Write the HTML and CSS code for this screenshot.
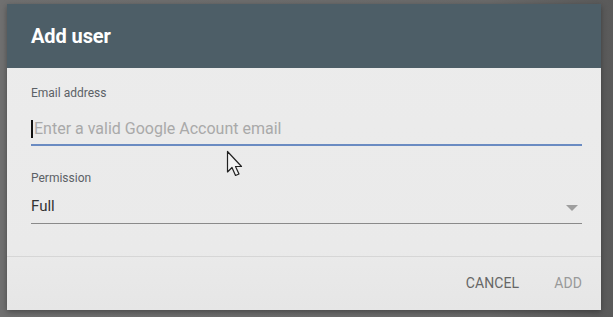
FILE: index.html
```html
<!DOCTYPE html>
<html>
<head>
<meta charset="utf-8">
<link rel="stylesheet" href="styles.css">
</head>
<body>
<div class="dialog">
  <div class="header"><h1 class="title">Add user</h1></div>
  <div class="content">
    <div class="field">
      <div class="label">Email address</div>
      <div class="input"><span class="caret"></span><span class="placeholder">Enter a valid Google Account email</span></div>
    </div>
    <div class="field perm">
      <div class="label">Permission</div>
      <div class="select"><span class="value">Full</span><span class="arrow"></span></div>
    </div>
  </div>
  <div class="actions">
    <span class="btn">CANCEL</span>
    <span class="btn add">ADD</span>
  </div>
</div>
<svg class="pointer" width="22" height="30" viewBox="0 0 22 30"><path d="M1.5 1.5 L1.5 22 L6 17.5 L9.5 25.5 L13 24 L9.5 16.5 L15.5 16.5 Z" fill="#f2f2f2" stroke="#222" stroke-width="1.2" stroke-linejoin="round"/></svg>
</body>
</html>
```
FILE: styles.css
```css
html, body { margin: 0; padding: 0; }
body {
  width: 613px; height: 317px; overflow: hidden;
  background: linear-gradient(90deg, #707070 0%, #6a6a6a 80%, #5a5a5a 100%);
  font-family: Roboto, "Liberation Sans", Arial, sans-serif;
  position: relative;
  padding: 4px 12px 0 7px;
  box-sizing: border-box;
}
.dialog {
  width: 594px; height: 306px;
  background: linear-gradient(180deg, #ececec 0%, #eaeaea 80%, #e6e6e6 100%);
  display: flex; flex-direction: column;
  box-shadow: 0 2px 6px rgba(0,0,0,0.35);
}
.header {
  height: 64px; background: #4d5e67;
  display: flex; align-items: center; padding-left: 24px;
}
.title {
  margin: 0; color: #fff; font-size: 20px; font-weight: 700; letter-spacing: -0.1px;
  padding-bottom: 1px;
}
.content { padding: 18px 19px 0 24px; height: 189px; box-sizing: border-box; border-bottom: 1px solid #d6d6d6; }
.label { font-size: 12px; color: #5b6166; line-height: 14px; }
.input {
  margin-top: 20px; height: 24px; border-bottom: 2px solid #6a8bc2;
  display: flex; align-items: flex-start; gap: 1px;
}
.caret { width: 2px; height: 18px; background: #111; margin-top: 0px; }
.placeholder { font-size: 16px; color: #a9a9a9; line-height: 18px; }
.perm { margin-top: 25px; }
.select {
  margin-top: 12px; height: 26px; border-bottom: 1px solid #8a8a8a;
  display: flex; justify-content: space-between; align-items: flex-start;
}
.value { font-size: 15px; color: #333; line-height: 18px; }
.arrow {
  width: 0; height: 0; margin: 8px 4px 0 0;
  border-left: 6px solid transparent; border-right: 6px solid transparent; border-top: 6px solid #9e9e9e;
}
.actions {
  flex: 1; display: flex; justify-content: flex-end; align-items: center; gap: 35px;
  padding: 0 19px 2px 0;
}
.btn { font-size: 14px; color: #666; letter-spacing: 0.1px; }
.btn.add { color: #999; }
.pointer { position: absolute; left: 226px; top: 150px; }
```
